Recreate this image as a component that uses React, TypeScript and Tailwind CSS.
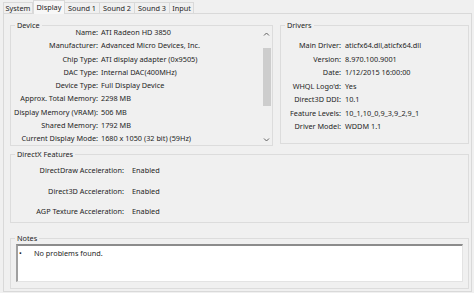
const TABS = [
  { label: "System", w: "w-[30px]" },
  { label: "Display", w: "w-[32px]" },
  { label: "Sound 1", w: "w-[35px]" },
  { label: "Sound 2", w: "w-[35px]" },
  { label: "Sound 3", w: "w-[35px]" },
  { label: "Input", w: "w-[24px]" },
];

const DEVICE = [
  ["Name", "ATI Radeon HD 3850"],
  ["Manufacturer", "Advanced Micro Devices, Inc."],
  ["Chip Type", "ATI display adapter (0x9505)"],
  ["DAC Type", "Internal DAC(400MHz)"],
  ["Device Type", "Full Display Device"],
  ["Approx. Total Memory", "2298 MB"],
  ["Display Memory (VRAM)", "506 MB"],
  ["Shared Memory", "1792 MB"],
  ["Current Display Mode", "1680 x 1050 (32 bit) (59Hz)"],
];

const DRIVERS = [
  ["Main Driver", "aticfx64.dll,aticfx64.dll"],
  ["Version", "8.970.100.9001"],
  ["Date", "1/12/2015 16:00:00"],
  ["WHQL Logo'd", "Yes"],
  ["Direct3D DDI", "10.1"],
  ["Feature Levels", "10_1,10_0,9_3,9_2,9_1"],
  ["Driver Model", "WDDM 1.1"],
];

const FEATURES = [
  ["DirectDraw Acceleration", "Enabled"],
  ["Direct3D Acceleration", "Enabled"],
  ["AGP Texture Acceleration", "Enabled"],
];

function Group({ title, className, children }: { title: string; className?: string; children: React.ReactNode }) {
  return (
    <fieldset className={`border border-[#dcdcdc] ${className ?? ""}`}>
      <legend className="ml-[4px] px-[2px] leading-[10px]">{title}</legend>
      {children}
    </fieldset>
  );
}

function Rows({ rows, labelW, gap, leading }: { rows: string[][]; labelW: string; gap: string; leading: string }) {
  return (
    <div className={`flex flex-col ${leading}`}>
      {rows.map(([k, v]) => (
        <div key={k} className={`flex ${gap} whitespace-nowrap`}>
          <div className={`${labelW} shrink-0 text-right`}>{k}:</div>
          <div>{v}</div>
        </div>
      ))}
    </div>
  );
}

export default function App() {
  return (
    <div
      className="w-[474px] h-[293px] overflow-hidden bg-[#f0f0f0] text-[7.3px] text-[#1e1e1e]"
      style={{ fontFamily: '"Noto Sans", "DejaVu Sans", sans-serif' }}
    >
      {/* Tabs */}
      <div className="flex items-end h-[13px] pl-[3px]">
        {TABS.map((t) => {
          const sel = t.label === "Display";
          return (
            <div
              key={t.label}
              className={
                sel
                  ? `${t.w} relative z-10 h-[14px] -mb-px bg-[#f7f7f7] border border-b-0 border-[#d9d9d9] leading-[12px] text-center`
                  : `${t.w} h-[11px] border border-b-0 border-l-0 first:border-l border-[#d9d9d9] leading-[10px] text-center`
              }
            >
              {t.label}
            </div>
          );
        })}
      </div>

      {/* Panel */}
      <div className="ml-[3px] w-[469px] h-[279px] border border-[#d9d9d9] pl-[6px] pr-[2px] pt-[6px] flex flex-col">
        <div className="flex gap-[7px] h-[126px]">
          <Group title="Device" className="w-[263px] h-[126px]">
            <div className="flex -mt-[4px] h-[120px]">
              <div className="flex-1">
                <Rows rows={DEVICE} labelW="w-[87px]" gap="gap-[3px]" leading="leading-[13.25px]" />
              </div>
              <div className="w-[11px] mt-[3px] mb-[1px] flex flex-col items-center bg-[#f0f0f0]">
                <svg width="11" height="11" viewBox="0 0 11 11" className="shrink-0">
                  <path d="M3 6.5 L5.5 4 L8 6.5" fill="none" stroke="#606060" strokeWidth="1" />
                </svg>
                <div className="w-[8px] h-[58px] mt-[8px] bg-[#cdcdcd]" />
                <div className="flex-1" />
                <svg width="11" height="11" viewBox="0 0 11 11" className="shrink-0">
                  <path d="M3 4.5 L5.5 7 L8 4.5" fill="none" stroke="#606060" strokeWidth="1" />
                </svg>
              </div>
            </div>
          </Group>
          <Group title="Drivers" className="w-[189px] h-[124px]">
            <div className="mt-[9px]">
              <Rows rows={DRIVERS} labelW="w-[60px]" gap="gap-[4px]" leading="leading-[13.5px]" />
            </div>
          </Group>
        </div>

        <Group title="DirectX Features" className="mt-[3px] h-[74px]">
          <div className="mt-px">
            <Rows rows={FEATURES} labelW="w-[113px]" gap="gap-[8px]" leading="leading-[20.5px]" />
          </div>
        </Group>

        <Group title="Notes" className="mt-[10px] h-[56px]">
          <div className="mx-[5px] mt-px h-[38px] bg-white border-t-2 border-l-2 border-t-[#8c8c8c] border-l-[#a0a0a0] border-r border-b border-r-[#e3e3e3] border-b-[#e3e3e3] flex leading-[12px] pt-[1px]">
            <span className="w-[16px] pl-[1px]">•</span>
            <span>No problems found.</span>
          </div>
        </Group>
      </div>
    </div>
  );
}
